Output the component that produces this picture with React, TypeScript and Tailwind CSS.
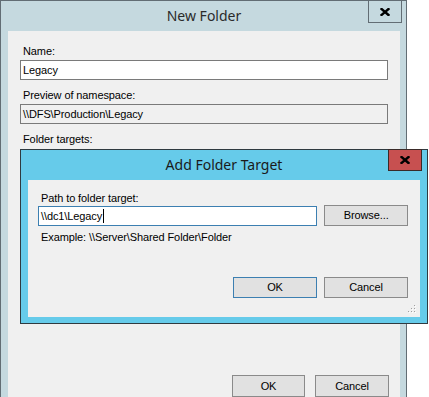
import type { ReactNode } from 'react';

const ui = "font-['Liberation_Sans',Arial,sans-serif] text-[11px] tracking-[-0.1px] leading-[13px] text-black";
const title = "font-['Noto_Sans',sans-serif] text-[14px] leading-none";

function CloseGlyph() {
  return (
    <svg width="10" height="8" viewBox="0 0 10 8">
      <path d="M1.5 1 L8.5 7 M8.5 1 L1.5 7" stroke="#000" strokeWidth="2.4" strokeLinecap="square" />
    </svg>
  );
}

function Button({ children, focused }: { children: ReactNode; focused?: boolean }) {
  return (
    <button
      className={`flex h-full w-full items-center justify-center border bg-[#e1e1e1] ${
        focused ? 'border-[#3c7fb1]' : 'border-[#8a8a8a]'
      } ${ui}`}
    >
      {children}
    </button>
  );
}

function ResizeGrip() {
  const dots = [
    [6, 0],
    [3, 3],
    [6, 3],
    [0, 6],
    [3, 6],
    [6, 6],
  ];
  return (
    <svg width="9" height="9" viewBox="0 0 9 9" className="absolute right-[3px] bottom-[3px]">
      {dots.map(([x, y]) => (
        <g key={`${x}-${y}`}>
          <rect x={x + 1} y={y + 1} width="1" height="1" fill="#ffffff" />
          <rect x={x} y={y} width="1" height="1" fill="#a0a0a0" />
        </g>
      ))}
    </svg>
  );
}

export default function App() {
  return (
    <div className="relative h-[397px] w-[429px] overflow-hidden bg-white">
      {/* New Folder (inactive) */}
      <div className="relative flex w-[407px] flex-col border border-b-0 border-[#626d74] bg-[#c5d9df] pr-[6px] pl-[7px]">
        <div className="flex h-[30px] items-center justify-center pb-[1px]">
          <span className={`${title} text-[#2b2b2b]`}>New Folder</span>
        </div>
        <button className="absolute top-[-1px] left-[367px] flex h-[23px] w-[34px] items-center justify-center border border-[#626d74] bg-[#c5d9df]">
          <CloseGlyph />
        </button>

        <div className={`flex flex-col bg-[#f0f0f0] pt-[14px] pr-[11px] pl-[12px] ${ui}`}>
          <label className="ml-[3px]">Name:</label>
          <div className="mt-[2px] flex h-[20px] w-[368px] items-center border border-[#7a7a7a] bg-white px-[2px]">
            Legacy
          </div>

          <label className="mt-[9px] ml-[3px]">Preview of namespace:</label>
          <div className="mt-[2px] flex h-[20px] w-[368px] items-center border border-[#7a7a7a] bg-[#f0f0f0] px-[2px]">
            \\DFS\Production\Legacy
          </div>

          <label className="mt-[9px] ml-[3px]">Folder targets:</label>
          <div className="h-[229px]" />

          <div className="flex justify-end gap-[10px]">
            <div className="h-[22px] w-[73px]">
              <Button>OK</Button>
            </div>
            <div className="h-[22px] w-[74px]">
              <Button>Cancel</Button>
            </div>
          </div>
          <div className="h-[20px]" />
        </div>
      </div>

      {/* Add Folder Target (active) */}
      <div className="absolute top-[149px] left-[20px] flex h-[175px] w-[408px] flex-col border border-[#2f3a40] bg-[#66cbea] px-[7px] pb-[6px]">
        <div className="flex h-[30px] items-center justify-center pb-[1px]">
          <span className={`${title} text-[#1a1a1a]`}>Add Folder Target</span>
        </div>
        <button className="absolute top-[-1px] left-[367px] flex h-[22px] w-[34px] items-center justify-center border border-[#3a2a28] bg-[#c75050]">
          <CloseGlyph />
        </button>

        <div className={`relative flex flex-1 flex-col bg-[#f0f0f0] pt-[12px] pr-[12px] pl-[10px] ${ui}`}>
          <label className="ml-[3px]">Path to folder target:</label>
          <div className="flex items-start gap-[7px]">
            <div className="mt-[1px] flex h-[20px] w-[280px] items-center border border-[#3c7fb1] bg-white px-[2px]">
              \\dc1\Legacy
              <span className="ml-[1px] inline-block h-[14px] w-px bg-black" />
            </div>
            <div className="h-[21px] w-[84px]">
              <Button>Browse...</Button>
            </div>
          </div>
          <p className="mt-[5px] ml-[3px]">Example: \\Server\Shared Folder\Folder</p>

          <div className="mt-[33px] flex justify-end gap-[7px]">
            <div className="h-[21px] w-[84px]">
              <Button focused>OK</Button>
            </div>
            <div className="h-[21px] w-[84px]">
              <Button>Cancel</Button>
            </div>
          </div>
          <ResizeGrip />
        </div>
      </div>
    </div>
  );
}
